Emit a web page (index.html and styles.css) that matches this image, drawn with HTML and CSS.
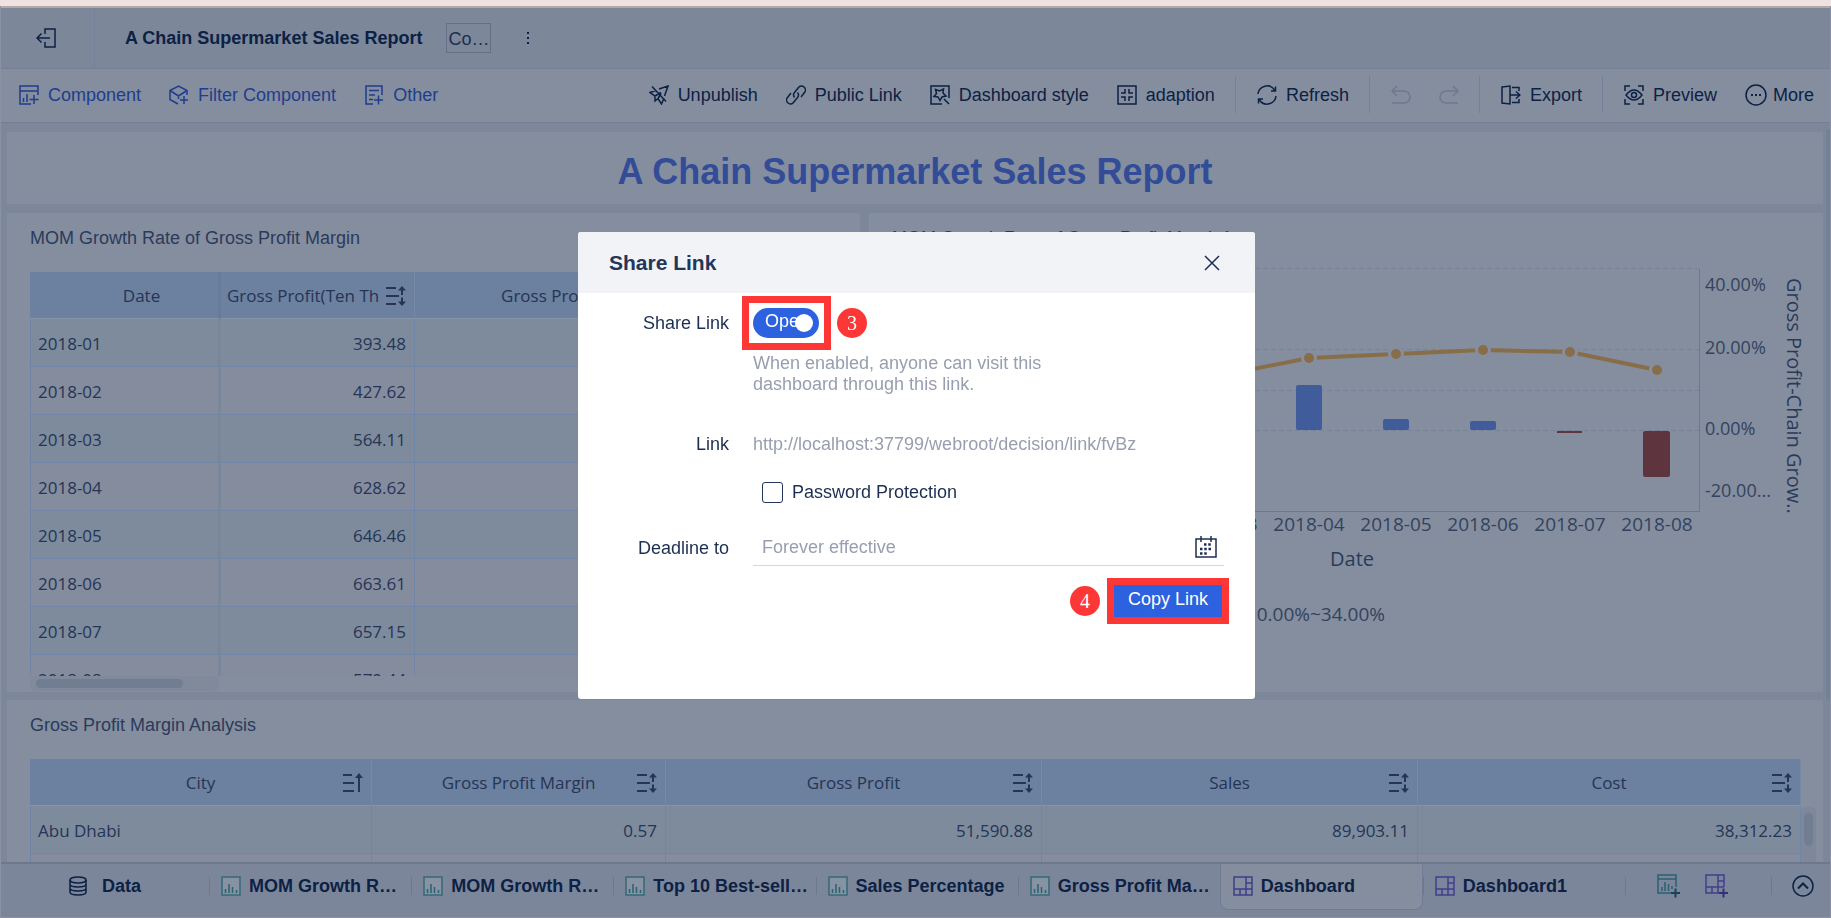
FILE: index.html
```html
<!DOCTYPE html>
<html lang="en">
<head>
<meta charset="utf-8">
<title>A Chain Supermarket Sales Report</title>
<link rel="stylesheet" href="styles.css">
</head>
<body>
<svg class="defs" width="0" height="0" aria-hidden="true">
  <defs>
    <symbol id="i-sort" viewBox="0 0 20 20"><path d="M0 2h10M0 10h13M0 18h10" stroke="currentColor" stroke-width="2" fill="none"/><path d="M16 2v7M16 11.500v7" stroke="currentColor" stroke-width="2"/><path d="M16 0l4 4.500h-8zM16 20l4-4.500h-8z" fill="currentColor"/></symbol>
    <symbol id="i-sort-up" viewBox="0 0 20 20"><path d="M0 2h9M0 10h11M0 18h11" stroke="currentColor" stroke-width="2" fill="none"/><path d="M16 2v17" stroke="currentColor" stroke-width="2"/><path d="M16 0l4 5h-8z" fill="currentColor"/></symbol>
    <symbol id="i-chart" viewBox="0 0 20 20"><path d="M1 1h18v18H1z" fill="#8793a2" stroke="#356a78" stroke-width="1.500"/><path d="M4.500 17v-4M8 17V8M11.500 17v-6M15.500 17v-3" stroke="#2a6070" stroke-width="1.500"/></symbol>
    <symbol id="i-dash" viewBox="0 0 20 20"><path d="M1 1h18v18H1zM1 13h18M13 1v18M13 7h6M7 13v6" fill="none" stroke="#3f3f8c" stroke-width="1.500"/></symbol>
  </defs>
</svg>
<div class="app">
  <header class="topbar">
    <button class="back" aria-label="Exit"><svg width="20" height="20" viewBox="0 0 20 20" fill="none" stroke="currentColor" stroke-width="1.500"><path d="M9 6V1h10v18H9v-5M14 10H1M5.500 5.500L1 10l4.500 4.500"/></svg></button>
    <h1 class="report-name">A Chain Supermarket Sales Report</h1>
    <span class="chip">Co…</span>
    <button class="kebab" aria-label="Menu"><svg width="4" height="14" viewBox="0 0 4 14" fill="currentColor"><path d="M1 1h2v2H1zM1 6h2v2H1zM1 11h2v2H1z"/></svg></button>
  </header>
  <nav class="toolbar">
    <div class="tools add">
      <button class="tool"><svg width="20" height="20" viewBox="0 0 20 20"><path d="M12 19H1V1h18v9M1 6h18M4.500 17v-4M8 17V9M15 10v9M10.500 14.500h9"/></svg>Component</button>
      <button class="tool"><svg width="20" height="20" viewBox="0 0 20 20"><path d="M9 19l-8-4.500V5.500L9.500 1 18 5.500V10M1 5.500L9.500 11 18 5.500M9.500 11v3M11 15h8M15 11v8"/></svg>Filter Component</button>
      <button class="tool"><svg width="20" height="20" viewBox="0 0 20 20"><path d="M9 19H2V1h16v9M5 5.500h10M5 10h6M5 14.500h4M10 15h9M14.500 10.500v9"/></svg>Other</button>
    </div>
    <div class="tools main">
      <button class="tool"><svg width="20" height="20" viewBox="0 0 20 20"><path d="M10 4L19 1l-3.500 10M7 5.500L1 7.500l5 3.500L12 7.500M6 11v5l3-2.500 3.500 5.500 2.500-6M9 13.500l3-5M3 1.500l14 15"/></svg>Unpublish</button>
      <button class="tool"><svg width="20" height="20" viewBox="0 0 20 20"><path d="M8.500 12.500a4 4 0 0 1 0-5l4-5a3.800 3.800 0 0 1 6 5l-3.500 4.500M11.500 7.500a4 4 0 0 1 0 5l-4 5a3.800 3.800 0 0 1-6-5L5 8"/></svg>Public Link</button>
      <button class="tool"><svg width="20" height="20" viewBox="0 0 20 20"><path d="M12 19H1V1h18v12M5.500 4.500l4 1.500 4-2-.5 4 3 3-4 1-2 3.500-2-3.500-4-.500 2.500-3zM14 14l5 5"/></svg>Dashboard style</button>
      <button class="tool"><svg width="20" height="20" viewBox="0 0 20 20"><path d="M1 1h18v18H1zM8 4v4H4M12 4v4h4M8 16v-4H4M12 16v-4h4"/></svg>adaption</button>
      <i class="rule"></i>
      <button class="tool"><svg width="20" height="20" viewBox="0 0 20 20"><path d="M1 9a9 9 0 0 1 16.500-4M19 11a9 9 0 0 1-16.500 4M18.500 1.500V6H14M1.500 18.500V14H6"/></svg>Refresh</button>
      <i class="rule"></i>
      <button class="tool off" aria-label="Undo" disabled><svg width="20" height="20" viewBox="0 0 20 20"><path d="M1 6h12a6 6 0 0 1 0 12H1M6 1L1 6l5 5"/></svg></button>
      <button class="tool off" aria-label="Redo" disabled><svg width="20" height="20" viewBox="0 0 20 20"><path d="M19 6H7a6 6 0 0 0 0 12h12M14 1l5 5-5 5"/></svg></button>
      <i class="rule"></i>
      <button class="tool"><svg width="20" height="20" viewBox="0 0 20 20"><path d="M1 2l8-1v18l-8-1zM11 2.500h7V6M11 17.500h7V14M9 10h10M15 6.500l4 3.500-4 3.500"/></svg>Export</button>
      <i class="rule"></i>
      <button class="tool"><svg width="20" height="20" viewBox="0 0 20 20"><path d="M1 6V1h5M14 1h5v5M19 14v5h-5M6 19H1v-5M2 10q8-10 16 0q-8 10-16 0z"/><circle cx="10" cy="10" r="2.500"/></svg>Preview</button>
      <button class="tool more"><svg width="22" height="22" viewBox="0 0 22 22"><circle cx="11" cy="11" r="10"/><path d="M6 11h2M10 11h2M14 11h2" stroke-width="2"/></svg>More</button>
    </div>
  </nav>

  <main class="board">
    <section class="card banner"><h2>A Chain Supermarket Sales Report</h2></section>
    <div class="pair">
      <section class="card">
        <h3>MOM Growth Rate of Gross Profit Margin</h3>
        <div class="clip">
          <table class="grid growth">
            <colgroup><col class="c-date"><col class="c-profit"><col></colgroup>
            <thead><tr><th class="date">Date</th><th><span class="cut">Gross Profit(Ten Thousand)</span><svg class="sort" width="20" height="20"><use href="#i-sort"/></svg></th><th>Gross Profit-Chain Growth Rate</th></tr></thead>
            <tbody>
              <tr><td>2018-01</td><td>393.48</td><td></td></tr>
              <tr><td>2018-02</td><td>427.62</td><td></td></tr>
              <tr><td>2018-03</td><td>564.11</td><td></td></tr>
              <tr><td>2018-04</td><td>628.62</td><td></td></tr>
              <tr><td>2018-05</td><td>646.46</td><td></td></tr>
              <tr><td>2018-06</td><td>663.61</td><td></td></tr>
              <tr><td>2018-07</td><td>657.15</td><td></td></tr>
              <tr><td>2018-08</td><td>579.44</td><td></td></tr>
            </tbody>
          </table>
        </div>
        <div class="hscroll"><i></i></div>
      </section>
      <section class="card">
        <h3>MOM Growth Rate of Gross Profit Margin1</h3>
        <svg class="plot" width="600" height="440" viewBox="1223 252 600 440" role="img" aria-label="Gross profit growth by month">
          <g stroke="#76819a" stroke-width="1" stroke-dasharray="5 3"><path d="M1223 268.500H1699M1223 349.500H1699M1223 390.500H1699M1223 430.500H1699"/></g>
          <path d="M1223 511.500H1700M1699.500 269V511" stroke="#6d788f" fill="none"/>
          <g fill="#405c9b"><rect x="1296" y="385" width="26" height="45" rx="2"/><rect x="1383" y="419" width="26" height="11" rx="2"/><rect x="1470" y="421" width="26" height="9" rx="2"/></g>
          <g fill="#5e343f"><rect x="1557" y="431" width="25" height="2"/><rect x="1643" y="431" width="27" height="46" rx="2"/></g>
          <path d="M1223 375L1309 358L1396 354L1483 350L1570 352L1657 370" stroke="#876e49" stroke-width="4" fill="none"/>
          <g fill="#876e49" stroke="#858e9e" stroke-width="3"><circle cx="1309" cy="358" r="6.500"/><circle cx="1396" cy="354" r="6.500"/><circle cx="1483" cy="350" r="6.500"/><circle cx="1570" cy="352" r="6.500"/><circle cx="1657" cy="370" r="6.500"/></g>
          <g class="tick"><text x="1705" y="291">40.00%</text><text x="1705" y="354">20.00%</text><text x="1705" y="435">0.00%</text><text x="1705" y="497">-20.00...</text></g>
          <g class="tick month"><text x="1222" y="531">2018-03</text><text x="1309" y="531">2018-04</text><text x="1396" y="531">2018-05</text><text x="1483" y="531">2018-06</text><text x="1570" y="531">2018-07</text><text x="1657" y="531">2018-08</text></g>
          <text class="axis" x="1330" y="566">Date</text>
          <text class="axis" transform="translate(1787 278) rotate(90)">Gross Profit-Chain Grow..</text>
          <text class="tick legend" x="1385" y="621">0.00%~34.00%</text>
        </svg>
      </section>
    </div>
    <section class="card analysis">
      <h3>Gross Profit Margin Analysis</h3>
      <div class="with-scroll">
        <table class="grid cities">
          <colgroup><col class="w1"><col class="w2"><col class="w3"><col class="w3"><col></colgroup>
          <thead><tr><th>City<svg class="sort" width="20" height="20"><use href="#i-sort-up"/></svg></th><th>Gross Profit Margin<svg class="sort" width="20" height="20"><use href="#i-sort"/></svg></th><th>Gross Profit<svg class="sort" width="20" height="20"><use href="#i-sort"/></svg></th><th>Sales<svg class="sort" width="20" height="20"><use href="#i-sort"/></svg></th><th>Cost<svg class="sort" width="20" height="20"><use href="#i-sort"/></svg></th></tr></thead>
          <tbody><tr><td>Abu Dhabi</td><td>0.57</td><td>51,590.88</td><td>89,903.11</td><td>38,312.23</td></tr><tr><td></td><td></td><td></td><td></td><td></td></tr></tbody>
        </table>
        <div class="vscroll"><i></i></div>
      </div>
    </section>
    <div class="page-scroll"></div>
  </main>

  <footer class="tabs">
    <button class="data"><svg width="18" height="20" viewBox="0 0 18 20" fill="none" stroke="currentColor" stroke-width="1.500"><ellipse cx="9" cy="4" rx="8" ry="3"/><path d="M1 4v12c0 4 16 4 16 0V4M1 8c0 4 16 4 16 0M1 12c0 4 16 4 16 0"/></svg>Data</button>
    <button class="tab"><svg width="20" height="20"><use href="#i-chart"/></svg><span>MOM Growth R…</span></button>
    <button class="tab"><svg width="20" height="20"><use href="#i-chart"/></svg><span>MOM Growth R…</span></button>
    <button class="tab"><svg width="20" height="20"><use href="#i-chart"/></svg><span>Top 10 Best-sell…</span></button>
    <button class="tab"><svg width="20" height="20"><use href="#i-chart"/></svg><span>Sales Percentage</span></button>
    <button class="tab"><svg width="20" height="20"><use href="#i-chart"/></svg><span>Gross Profit Ma…</span></button>
    <button class="tab on"><svg width="20" height="20"><use href="#i-dash"/></svg><span>Dashboard</span></button>
    <button class="tab"><svg width="20" height="20"><use href="#i-dash"/></svg><span>Dashboard1</span></button>
    <div class="extras">
      <button aria-label="Add component"><svg width="24" height="24" viewBox="0 0 24 24" fill="none" stroke="#2a6070" stroke-width="1.500"><path d="M14 19H1V1h18v12M1 5h18M5 17v-4M8 17V8M11.500 17v-7M15 15v-3"/><path d="M14 19h9M18.500 14.500v9" stroke="#124555" stroke-width="2"/></svg></button>
      <button aria-label="Add dashboard"><svg width="24" height="24" viewBox="0 0 24 24" fill="none" stroke="#3f3f8c" stroke-width="1.500"><path d="M14 19H1V1h18v12M1 13h18M13 1v18M13 7h6M7 13v6"/><path d="M14 19h9M18.500 14.500v9" stroke="#30307c" stroke-width="2"/></svg></button>
    </div>
    <button class="up" aria-label="Expand"><svg width="22" height="22" viewBox="0 0 22 22" fill="none" stroke="currentColor" stroke-width="1.500"><circle cx="11" cy="11" r="10"/><path d="M6 13.500l5-5 5 5" stroke-width="2"/></svg></button>
  </footer>
</div>

<div class="layer">
  <div class="dialog" role="dialog" aria-labelledby="dlg">
    <div class="dialog-head"><h2 id="dlg">Share Link</h2><button class="close" aria-label="Close"><svg width="16" height="16" viewBox="0 0 16 16" fill="none" stroke="currentColor" stroke-width="1.500"><path d="M1 1l14 14M15 1L1 15"/></svg></button></div>
    <form class="form">
      <span class="label">Share Link</span>
      <div class="share"><span class="mark"><button type="button" class="switch" role="switch" aria-checked="true">Open<i></i></button></span><b class="step">3</b></div>
      <p class="hint">When enabled, anyone can visit this dashboard through this link.</p>
      <span class="label link">Link</span>
      <span class="url">http://localhost:37799/webroot/decision/link/fvBz</span>
      <label class="check"><input type="checkbox">Password Protection</label>
      <label class="label" for="deadline">Deadline to</label>
      <div class="field"><input id="deadline" type="text" placeholder="Forever effective"><svg width="22" height="22" viewBox="0 0 22 22" fill="none" stroke="currentColor" stroke-width="1.500"><path d="M1 3h20v18H1zM6 0v6M16 0v6"/><path d="M9 8.500h8M5 13h12M5 17.500h8" stroke-width="2.500" stroke-dasharray="2.500 1.750"/></svg></div>
      <div class="submit"><b class="step">4</b><span class="mark"><button type="button" class="copy">Copy Link</button></span></div>
    </form>
  </div>
</div>
</body>
</html>
```

FILE: styles.css
```css
* { box-sizing: border-box; }
body { margin: 0; font: 18px/22px "Liberation Sans", Arial, sans-serif; color: #0c2144; background: #8a93a5; }
h1, h2, h3, p { margin: 0; }
button { font: inherit; color: inherit; background: none; border: 0; padding: 0; white-space: nowrap; }
svg { display: block; flex: none; }
.defs { position: absolute; }

.app { height: 100vh; display: flex; flex-direction: column; padding: 0 1px 1px; border-top: 6px solid #efe2e1; overflow: hidden; }
.topbar { flex: none; display: flex; align-items: center; height: 63px; background: #7c879a; border-top: 2px solid #b7a8a6; border-bottom: 1px solid #737f94; }
.back { width: 94px; height: 100%; padding-left: 35px; border-right: 1px solid #75819a; }
.report-name { margin-left: 30px; font-size: 18px; line-height: 22px; }
.chip { margin-left: 24px; width: 45px; height: 30px; line-height: 30px; padding-left: 1px; border: 1px solid #637088; color: #1b2f50; }
.kebab { margin-left: 35px; }

.toolbar { flex: none; height: 54px; display: flex; justify-content: space-between; align-items: center; padding: 0 16px 2px 18px; background: #858e9e; border-bottom: 1px solid #747f93; }
.tools { display: flex; align-items: center; }
.add { gap: 28px; color: #1f3d8f; }
.main { gap: 28px; }
.tool { display: flex; align-items: center; gap: 9px; }
.more { gap: 6px; }
.tool svg { fill: none; stroke: currentColor; stroke-width: 1.5; }
.off { color: #6c7991; }
.rule { width: 1px; height: 37px; margin: 0 -7px 0 -8px; background: #75819a; }

.board { position: relative; flex: 1; min-height: 0; overflow: hidden; display: flex; flex-direction: column; gap: 9px; padding: 9px 7px 0 6px; background: #7c889a; }
.card { background: #858e9e; min-width: 0; }
.card h3 { font-weight: 400; font-size: 18px; line-height: 22px; padding: 14px 23px 0; color: #2a3b5b; }
.banner { flex: none; height: 72px; display: flex; align-items: center; justify-content: center; padding-top: 8px; }
.banner h2 { font-size: 36px; line-height: 42px; color: #324c98; }
.pair { flex: none; display: grid; grid-template-columns: 853fr 954fr; gap: 9px; height: 478px; }
.clip { margin: 23px 0 0 23px; height: 404px; overflow: hidden; }
.grid { border-collapse: separate; border-spacing: 0; table-layout: fixed; font: 17px/24px "Open Sans", "Noto Sans", sans-serif; color: #243555; }
.grid th { position: relative; height: 47px; padding: 2px 9px 0; font-weight: 400; background: #6c80a0; border-right: 1px solid #7889a5; border-bottom: 1px solid #8593a8; text-align: center; white-space: nowrap; overflow: hidden; }
.grid td { height: 48px; padding: 2px 8px 0; text-align: right; border-right: 1px solid #7186a6; border-bottom: 1px solid #7186a6; }
.grid td:first-child { text-align: left; padding-left: 7px; border-left: 1px solid #7186a6; }
.grid tbody tr:nth-child(odd) { background: #7e8b9d; }
.grid tbody tr:nth-child(even) { background: #858c9e; }
.sort { position: absolute; right: 8px; top: 14px; }
.growth { width: 806px; }
.c-date { width: 191px; }
.c-profit { width: 194px; }
.grid .date { padding-left: 44px; }
.growth td:first-child, .growth .date { border-right: 3px solid #7a879b; }
.growth .date { border-right-color: #677b9c; }
.cut { display: block; width: 152px; overflow: hidden; text-align: left; margin-left: -3px; }
.hscroll { width: 189px; height: 15px; margin-left: 23px; padding: 3px 6px; border-radius: 5px; background: #808a9b; }
.hscroll i { display: block; width: 147px; height: 9px; border-radius: 5px; background: #717e91; }
.plot { margin: 3px 0 0 auto; }
.tick { font: 18px "Open Sans", "Noto Sans", sans-serif; fill: #33435f; }
.month { font-size: 19px; text-anchor: middle; }
.legend { font-size: 19px; text-anchor: end; }
.axis { font: 20px "Open Sans", "Noto Sans", sans-serif; fill: #2a3b59; }

.analysis { flex: none; height: 200px; }
.with-scroll { display: flex; align-items: flex-start; margin: 23px 7px 0 23px; }
.cities { flex: 1; width: 100%; }
.w1 { width: 342px; }
.w2 { width: 294px; }
.w3 { width: 376px; }
.vscroll { width: 15px; height: 120px; margin-top: 48px; padding: 6px 3px; border-radius: 5px 5px 0 0; background: #7f889b; }
.vscroll i { display: block; height: 33px; border-radius: 5px; background: #717d91; }
.page-scroll { position: absolute; right: 0; top: 6px; width: 4px; height: 571px; border-radius: 2px; background: #748095; }

.tabs { flex: none; display: flex; align-items: flex-start; height: 55px; background: #7c869a; border-top: 2px solid #6c788e; font-weight: 700; }
.tabs button { display: flex; align-items: center; height: 44px; }
.tabs .data { width: 208px; padding-left: 68px; gap: 15px; }
.tabs .tab { position: relative; flex: 1 1 0; max-width: 203px; gap: 8px; padding-left: 12px; }
.tabs .tab::before { content: ""; position: absolute; left: 0; top: 13px; width: 1px; height: 18px; background: #6b7890; }
.tabs .on { height: 46px; padding-bottom: 2px; background: #858e9e; border: 1px solid #707c92; border-top: 0; border-radius: 0 0 8px 8px; }
.tabs .on::before { display: none; }
.extras { display: flex; gap: 24px; margin-top: 13px; padding: 0 42px 0 31px; height: 18px; align-items: center; border: solid #6b7890; border-width: 0 1px; }
.tabs .up { margin-left: 20px; margin-right: 16px; }

.layer { position: fixed; inset: 0; display: flex; justify-content: center; align-items: flex-start; padding-top: 232px; }
.dialog { width: 677px; min-height: 467px; margin-left: 2px; border-radius: 3px; background: #fff; overflow: hidden; color: #1c2f52; }
.dialog-head { display: flex; justify-content: space-between; align-items: center; height: 61px; padding: 0 35px 0 31px; background: #f2f3f7; }
.dialog-head h2 { font-size: 21px; line-height: 24px; color: #22365a; }
.form { display: grid; grid-template-columns: 151px 471px; column-gap: 24px; align-items: start; }
.label { text-align: right; padding-top: 19px; }
.share { display: flex; align-items: center; gap: 6px; margin: 3px 0 0 -11px; }
.mark { display: block; border: 7px solid #fc3735; }
.share .mark { padding: 5px 5px 5px 4px; }
.switch { position: relative; display: block; width: 66px; height: 30px; padding: 0 0 4px 12px; border-radius: 15px; background: #2c62df; color: #fff; text-align: left; line-height: 26px; }
.switch i { position: absolute; right: 6px; top: 6px; width: 18px; height: 18px; border-radius: 9px; background: #fff; }
.step { width: 30px; height: 30px; border-radius: 15px; background: #fc3735; color: #fff; font: 20px/30px "Liberation Serif", serif; text-align: center; }
.hint { grid-column: 2; width: 300px; margin-top: 3px; line-height: 21px; color: #979eb0; }
.link { padding-top: 0; margin-top: 38px; }
.url { margin-top: 38px; color: #979eb0; }
.check { grid-column: 2; display: flex; align-items: center; gap: 9px; margin: 26px 0 0 9px; }
.check input { appearance: none; width: 21px; height: 21px; margin: 0; border: 1px solid #22365a; border-radius: 3px; background: #fff; }
.form label.label { padding-top: 34px; }
.field { display: flex; align-items: center; justify-content: space-between; height: 38px; margin-top: 25px; padding: 0 7px 0 9px; border-bottom: 1px solid #d4d7df; }
.field input { flex: 1; min-width: 0; border: 0; padding: 0; outline: 0; background: none; font: inherit; color: #1c2f52; }
.field input::placeholder { color: #979eb0; opacity: 1; }
.submit { grid-column: 2; display: flex; justify-content: flex-end; align-items: center; gap: 7px; margin: 12px -5px 0 0; }
.copy { display: block; width: 108px; height: 32px; padding-bottom: 4px; background: #2c62df; color: #fff; }
```
